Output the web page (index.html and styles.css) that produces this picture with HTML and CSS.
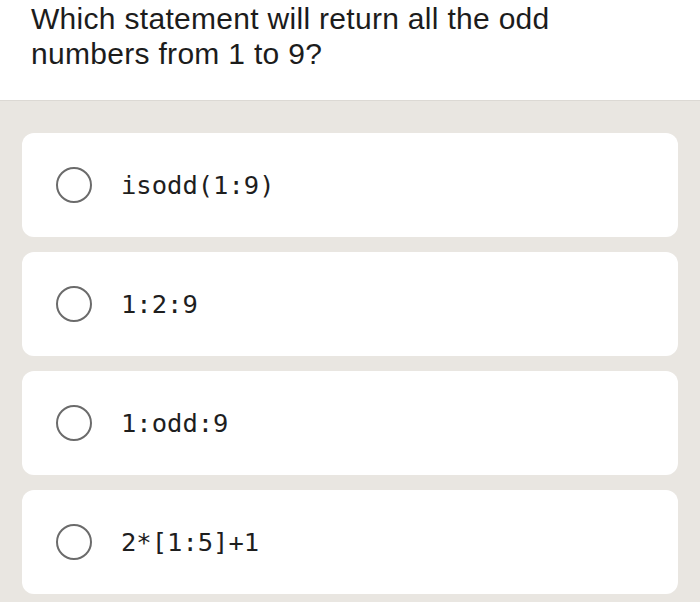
FILE: index.html
```html
<!DOCTYPE html>
<html>
<head>
<meta charset="utf-8">
<link rel="stylesheet" href="styles.css">
</head>
<body>
<div class="question">Which statement will return all the odd numbers from 1 to 9?</div>
<div class="options">
  <div class="option"><span class="radio"></span><span class="label">isodd(1:9)</span></div>
  <div class="option"><span class="radio"></span><span class="label">1:2:9</span></div>
  <div class="option"><span class="radio"></span><span class="label">1:odd:9</span></div>
  <div class="option"><span class="radio"></span><span class="label">2*[1:5]+1</span></div>
</div>
</body>
</html>
```
FILE: styles.css
```css
html, body {
  margin: 0;
  padding: 0;
  background: #e9e6e1;
}
.question {
  box-sizing: border-box;
  background: #ffffff;
  font-family: "Liberation Sans", Arial, sans-serif;
  font-size: 30px;
  letter-spacing: 0.3px;
  line-height: 35px;
  color: #1c1c1c;
  padding: 1px 120px 0 31px;
  height: 101px;
  border-bottom: 1px solid #dcd9d4;
}
.options {
  display: flex;
  flex-direction: column;
  gap: 15px;
  padding: 32px 22px 0 22px;
}
.option {
  background: #ffffff;
  border-radius: 12px;
  height: 104px;
  display: flex;
  align-items: center;
  padding-left: 34px;
}
.radio {
  width: 32px;
  height: 32px;
  border: 2px solid #6b6b6b;
  border-radius: 50%;
  flex: none;
}
.label {
  margin-left: 29px;
  font-family: "DejaVu Sans Mono", monospace;
  font-size: 25.5px;
  color: #1e1e1e;
}
```
